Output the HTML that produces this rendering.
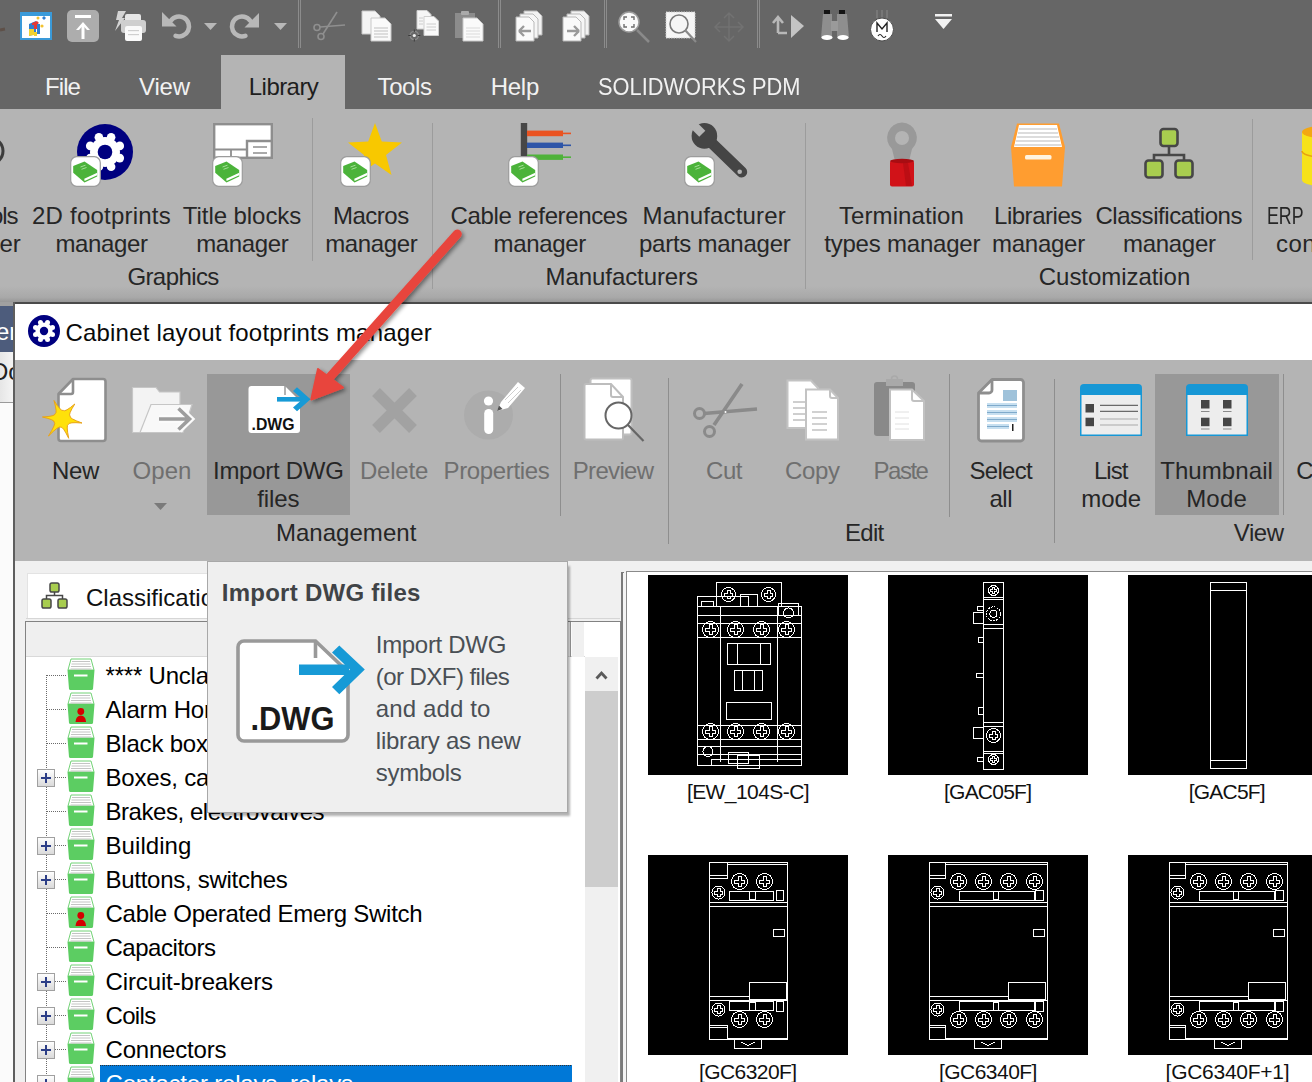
<!DOCTYPE html>
<html><head><meta charset="utf-8"><style>
html,body{margin:0;padding:0;}
body{width:1312px;height:1082px;overflow:hidden;position:relative;background:#f0f0f0;font-family:"Liberation Sans", sans-serif;}
svg{overflow:visible}
</style></head><body>
<div style="position:absolute;left:0px;top:0px;width:1312px;height:109px;background:#666666;"></div>
<div style="position:absolute;left:298px;top:0px;width:1px;height:48px;background:#8c8c8c;"></div>
<div style="position:absolute;left:300px;top:0px;width:1px;height:48px;background:#8c8c8c;"></div>
<div style="position:absolute;left:498px;top:0px;width:1px;height:48px;background:#8c8c8c;"></div>
<div style="position:absolute;left:500px;top:0px;width:1px;height:48px;background:#8c8c8c;"></div>
<div style="position:absolute;left:604px;top:0px;width:1px;height:48px;background:#8c8c8c;"></div>
<div style="position:absolute;left:606px;top:0px;width:1px;height:48px;background:#8c8c8c;"></div>
<div style="position:absolute;left:757px;top:0px;width:1px;height:48px;background:#8c8c8c;"></div>
<div style="position:absolute;left:759px;top:0px;width:1px;height:48px;background:#8c8c8c;"></div>
<div style="position:absolute;left:221px;top:55px;width:124px;height:54px;background:#b4b4b4;"></div>
<div style="position:absolute;left:45.0px;top:75.1px;font-size:24px;line-height:24px;color:#f2f2f2;font-weight:400;letter-spacing:-0.92px;white-space:pre;">File</div>
<div style="position:absolute;left:139.0px;top:75.1px;font-size:24px;line-height:24px;color:#f2f2f2;font-weight:400;letter-spacing:-0.15px;white-space:pre;">View</div>
<div style="position:absolute;left:248.8px;top:75.1px;font-size:24px;line-height:24px;color:#1e1e1e;font-weight:400;letter-spacing:-0.55px;white-space:pre;">Library</div>
<div style="position:absolute;left:377.6px;top:75.1px;font-size:24px;line-height:24px;color:#f2f2f2;font-weight:400;letter-spacing:-0.41px;white-space:pre;">Tools</div>
<div style="position:absolute;left:490.7px;top:75.1px;font-size:24px;line-height:24px;color:#f2f2f2;font-weight:400;letter-spacing:-0.26px;white-space:pre;">Help</div>
<div style="position:absolute;left:598.0px;top:75.1px;font-size:24px;line-height:24px;color:#f2f2f2;font-weight:400;letter-spacing:0.00px;white-space:pre;transform:scaleX(0.9093);transform-origin:0 0;">SOLIDWORKS PDM</div>
<div style="position:absolute;left:0px;top:109px;width:1312px;height:194px;background:#b4b4b4;"></div>
<div style="position:absolute;left:0px;top:286px;width:1312px;height:16px;background:linear-gradient(#b4b4b4,#a9a9a9 70%,#979797);"></div>
<div style="position:absolute;left:0px;top:302px;width:13px;height:4px;background:#a0a0a0;"></div>
<div style="position:absolute;left:13px;top:302px;width:1299px;height:2px;background:#4a4a4a;"></div>
<div style="position:absolute;left:312px;top:118px;width:1px;height:143px;background:#9c9c9c;"></div>
<div style="position:absolute;left:432px;top:123px;width:1px;height:166px;background:#9c9c9c;"></div>
<div style="position:absolute;left:805px;top:123px;width:1px;height:166px;background:#9c9c9c;"></div>
<div style="position:absolute;left:1252px;top:119px;width:1px;height:141px;background:#9c9c9c;"></div>
<div style="position:absolute;left:-10.0px;top:203.6px;font-size:24px;line-height:24px;color:#262626;font-weight:400;letter-spacing:-1.03px;white-space:pre;">ols</div>
<div style="position:absolute;left:-0.5px;top:231.9px;font-size:24px;line-height:24px;color:#262626;font-weight:400;letter-spacing:0.00px;white-space:pre;">er</div>
<div style="position:absolute;left:32.0px;top:203.6px;font-size:24px;line-height:24px;color:#262626;font-weight:400;letter-spacing:0.22px;white-space:pre;">2D footprints</div>
<div style="position:absolute;left:55.4px;top:231.9px;font-size:24px;line-height:24px;color:#262626;font-weight:400;letter-spacing:-0.35px;white-space:pre;">manager</div>
<div style="position:absolute;left:182.8px;top:203.6px;font-size:24px;line-height:24px;color:#262626;font-weight:400;letter-spacing:-0.06px;white-space:pre;">Title blocks</div>
<div style="position:absolute;left:196.2px;top:231.9px;font-size:24px;line-height:24px;color:#262626;font-weight:400;letter-spacing:-0.35px;white-space:pre;">manager</div>
<div style="position:absolute;left:332.9px;top:203.6px;font-size:24px;line-height:24px;color:#262626;font-weight:400;letter-spacing:-0.48px;white-space:pre;">Macros</div>
<div style="position:absolute;left:325.2px;top:231.9px;font-size:24px;line-height:24px;color:#262626;font-weight:400;letter-spacing:-0.35px;white-space:pre;">manager</div>
<div style="position:absolute;left:127.4px;top:264.6px;font-size:24px;line-height:24px;color:#262626;font-weight:400;letter-spacing:-0.59px;white-space:pre;">Graphics</div>
<div style="position:absolute;left:450.6px;top:203.6px;font-size:24px;line-height:24px;color:#262626;font-weight:400;letter-spacing:-0.37px;white-space:pre;">Cable references</div>
<div style="position:absolute;left:493.6px;top:231.9px;font-size:24px;line-height:24px;color:#262626;font-weight:400;letter-spacing:-0.35px;white-space:pre;">manager</div>
<div style="position:absolute;left:642.6px;top:203.6px;font-size:24px;line-height:24px;color:#262626;font-weight:400;letter-spacing:0.16px;white-space:pre;">Manufacturer</div>
<div style="position:absolute;left:639.0px;top:231.9px;font-size:24px;line-height:24px;color:#262626;font-weight:400;letter-spacing:-0.25px;white-space:pre;">parts manager</div>
<div style="position:absolute;left:545.6px;top:264.6px;font-size:24px;line-height:24px;color:#262626;font-weight:400;letter-spacing:-0.08px;white-space:pre;">Manufacturers</div>
<div style="position:absolute;left:839.0px;top:203.6px;font-size:24px;line-height:24px;color:#262626;font-weight:400;letter-spacing:0.08px;white-space:pre;">Termination</div>
<div style="position:absolute;left:824.2px;top:231.9px;font-size:24px;line-height:24px;color:#262626;font-weight:400;letter-spacing:-0.21px;white-space:pre;">types manager</div>
<div style="position:absolute;left:994.0px;top:203.6px;font-size:24px;line-height:24px;color:#262626;font-weight:400;letter-spacing:-0.47px;white-space:pre;">Libraries</div>
<div style="position:absolute;left:992.0px;top:231.9px;font-size:24px;line-height:24px;color:#262626;font-weight:400;letter-spacing:-0.26px;white-space:pre;">manager</div>
<div style="position:absolute;left:1095.4px;top:203.6px;font-size:24px;line-height:24px;color:#262626;font-weight:400;letter-spacing:-0.45px;white-space:pre;">Classifications</div>
<div style="position:absolute;left:1123.0px;top:231.9px;font-size:24px;line-height:24px;color:#262626;font-weight:400;letter-spacing:-0.30px;white-space:pre;">manager</div>
<div style="position:absolute;left:1038.8px;top:264.6px;font-size:24px;line-height:24px;color:#262626;font-weight:400;letter-spacing:-0.05px;white-space:pre;">Customization</div>
<div style="position:absolute;left:1266.5px;top:203.6px;font-size:24px;line-height:24px;color:#262626;font-weight:400;letter-spacing:0.00px;white-space:pre;transform:scaleX(0.7395);transform-origin:0 0;">ERP</div>
<div style="position:absolute;left:1276.0px;top:231.9px;font-size:24px;line-height:24px;color:#262626;font-weight:400;letter-spacing:0.43px;white-space:pre;">con</div>
<div style="position:absolute;left:0px;top:306px;width:13px;height:46px;background:#4d5c7c;"></div>
<div style="position:absolute;left:-4.0px;top:320.1px;font-size:24px;line-height:24px;color:#ffffff;font-weight:400;letter-spacing:0.00px;white-space:pre;">er</div>
<div style="position:absolute;left:0px;top:352px;width:13px;height:50px;background:linear-gradient(90deg,#e6e6e6,#f4f4f4);"></div>
<div style="position:absolute;left:-9.0px;top:360.1px;font-size:24px;line-height:24px;color:#222;font-weight:400;letter-spacing:0.00px;white-space:pre;">Do</div>
<div style="position:absolute;left:0px;top:402px;width:13px;height:1px;background:#9a9a9a;"></div>
<div style="position:absolute;left:0px;top:403px;width:13px;height:679px;background:#fbfbfb;"></div>
<div style="position:absolute;left:13px;top:302px;width:2px;height:780px;background:#5e5e5e;"></div>
<div style="position:absolute;left:15px;top:304px;width:1297px;height:56px;background:#ffffff;"></div>
<div style="position:absolute;left:65.5px;top:321.3px;font-size:24px;line-height:24px;color:#0a0a0a;font-weight:400;letter-spacing:0.19px;white-space:pre;">Cabinet layout footprints manager</div>
<div style="position:absolute;left:15px;top:360px;width:1297px;height:201px;background:#b4b4b4;"></div>
<div style="position:absolute;left:207px;top:374px;width:143px;height:141px;background:#989898;"></div>
<div style="position:absolute;left:1155px;top:374px;width:124px;height:141px;background:#989898;"></div>
<div style="position:absolute;left:560px;top:374px;width:1px;height:142px;background:#8e8e8e;"></div>
<div style="position:absolute;left:668px;top:378px;width:1px;height:166px;background:#8e8e8e;"></div>
<div style="position:absolute;left:949px;top:374px;width:1px;height:143px;background:#8e8e8e;"></div>
<div style="position:absolute;left:1054px;top:379px;width:1px;height:164px;background:#8e8e8e;"></div>
<div style="position:absolute;left:1283px;top:374px;width:1px;height:141px;background:#8e8e8e;"></div>
<div style="position:absolute;left:52.0px;top:459.4px;font-size:24px;line-height:24px;color:#262626;font-weight:400;letter-spacing:-0.34px;white-space:pre;">New</div>
<div style="position:absolute;left:132.5px;top:459.4px;font-size:24px;line-height:24px;color:#6f6f6f;font-weight:400;letter-spacing:0.07px;white-space:pre;">Open</div>
<div style="position:absolute;left:213.0px;top:459.4px;font-size:24px;line-height:24px;color:#262626;font-weight:400;letter-spacing:-0.27px;white-space:pre;">Import DWG</div>
<div style="position:absolute;left:257.3px;top:487.1px;font-size:24px;line-height:24px;color:#262626;font-weight:400;letter-spacing:-0.14px;white-space:pre;">files</div>
<div style="position:absolute;left:360.0px;top:459.4px;font-size:24px;line-height:24px;color:#6f6f6f;font-weight:400;letter-spacing:-0.23px;white-space:pre;">Delete</div>
<div style="position:absolute;left:443.6px;top:459.4px;font-size:24px;line-height:24px;color:#6f6f6f;font-weight:400;letter-spacing:-0.36px;white-space:pre;">Properties</div>
<div style="position:absolute;left:572.7px;top:459.4px;font-size:24px;line-height:24px;color:#6f6f6f;font-weight:400;letter-spacing:-0.65px;white-space:pre;">Preview</div>
<div style="position:absolute;left:275.9px;top:521.1px;font-size:24px;line-height:24px;color:#262626;font-weight:400;letter-spacing:0.04px;white-space:pre;">Management</div>
<div style="position:absolute;left:706.0px;top:459.4px;font-size:24px;line-height:24px;color:#6f6f6f;font-weight:400;letter-spacing:-0.45px;white-space:pre;">Cut</div>
<div style="position:absolute;left:785.0px;top:459.4px;font-size:24px;line-height:24px;color:#6f6f6f;font-weight:400;letter-spacing:-0.38px;white-space:pre;">Copy</div>
<div style="position:absolute;left:873.5px;top:459.4px;font-size:24px;line-height:24px;color:#6f6f6f;font-weight:400;letter-spacing:-1.48px;white-space:pre;">Paste</div>
<div style="position:absolute;left:845.0px;top:521.1px;font-size:24px;line-height:24px;color:#262626;font-weight:400;letter-spacing:-0.74px;white-space:pre;">Edit</div>
<div style="position:absolute;left:969.5px;top:459.4px;font-size:24px;line-height:24px;color:#262626;font-weight:400;letter-spacing:-0.70px;white-space:pre;">Select</div>
<div style="position:absolute;left:989.5px;top:487.1px;font-size:24px;line-height:24px;color:#262626;font-weight:400;letter-spacing:-0.51px;white-space:pre;">all</div>
<div style="position:absolute;left:1093.9px;top:459.4px;font-size:24px;line-height:24px;color:#262626;font-weight:400;letter-spacing:-0.94px;white-space:pre;">List</div>
<div style="position:absolute;left:1081.2px;top:487.1px;font-size:24px;line-height:24px;color:#262626;font-weight:400;letter-spacing:-0.01px;white-space:pre;">mode</div>
<div style="position:absolute;left:1160.2px;top:459.4px;font-size:24px;line-height:24px;color:#262626;font-weight:400;letter-spacing:0.08px;white-space:pre;">Thumbnail</div>
<div style="position:absolute;left:1186.2px;top:487.1px;font-size:24px;line-height:24px;color:#262626;font-weight:400;letter-spacing:0.19px;white-space:pre;">Mode</div>
<div style="position:absolute;left:1233.8px;top:521.1px;font-size:24px;line-height:24px;color:#262626;font-weight:400;letter-spacing:-0.45px;white-space:pre;">View</div>
<div style="position:absolute;left:1296.3px;top:459.4px;font-size:24px;line-height:24px;color:#262626;font-weight:400;letter-spacing:0.00px;white-space:pre;">C</div>
<div style="position:absolute;left:15px;top:561px;width:1297px;height:521px;background:#f0f0f0;"></div>
<div style="position:absolute;left:27px;top:573px;width:500px;height:46px;background:#ffffff;border-top:1px solid #e3e3e3;border-left:1px solid #e3e3e3;box-sizing:border-box"></div>
<div style="position:absolute;left:86.0px;top:586.1px;font-size:24px;line-height:24px;color:#111;font-weight:400;letter-spacing:0.00px;white-space:pre;">Classifications</div>
<div style="position:absolute;left:26px;top:618px;width:594px;height:1px;background:#d6d6d6;"></div>
<div style="position:absolute;left:25px;top:621px;width:596px;height:461px;background:#ffffff;border-top:1px solid #828282;border-left:1px solid #828282;border-right:1px solid #828282;box-sizing:border-box"></div>
<div style="position:absolute;left:26px;top:622px;width:545px;height:34px;background:#efefef;"></div>
<div style="position:absolute;left:26px;top:656px;width:559px;height:1px;background:#d9d9d9;"></div>
<div style="position:absolute;left:570px;top:622px;width:1px;height:35px;background:#9a9a9a;"></div>
<div style="position:absolute;left:572px;top:622px;width:12px;height:35px;background:#f0f0f0;"></div>
<div style="position:absolute;left:585px;top:657px;width:33px;height:425px;background:#f0f0f0;"></div>
<div style="position:absolute;left:585px;top:691px;width:33px;height:196px;background:#cdcdcd;"></div>
<div style="position:absolute;left:621px;top:571.5px;width:3px;height:1.5px;background:#7a7a7a;"></div>
<div style="position:absolute;left:621px;top:572px;width:2px;height:510px;background:#7a7a7a;"></div>
<div style="position:absolute;left:623px;top:573px;width:3px;height:509px;background:#f4f4f4;"></div>
<div style="position:absolute;left:626px;top:571px;width:686px;height:511px;background:#ffffff;border-top:1px solid #8a8a8a;border-left:1px solid #8a8a8a;box-sizing:border-box"></div>
<div style="position:absolute;left:648px;top:575px;width:200px;height:200px;background:#000;"></div>
<div style="position:absolute;left:648px;top:855px;width:200px;height:200px;background:#000;"></div>
<div style="position:absolute;left:888px;top:575px;width:200px;height:200px;background:#000;"></div>
<div style="position:absolute;left:888px;top:855px;width:200px;height:200px;background:#000;"></div>
<div style="position:absolute;left:1128px;top:575px;width:200px;height:200px;background:#000;"></div>
<div style="position:absolute;left:1128px;top:855px;width:200px;height:200px;background:#000;"></div>
<div style="position:absolute;left:686.9px;top:781.1px;font-size:21px;line-height:21px;color:#111;font-weight:400;letter-spacing:-0.56px;white-space:pre;">[EW_104S-C]</div>
<div style="position:absolute;left:944.0px;top:781.1px;font-size:21px;line-height:21px;color:#111;font-weight:400;letter-spacing:-0.77px;white-space:pre;">[GAC05F]</div>
<div style="position:absolute;left:1188.8px;top:781.1px;font-size:21px;line-height:21px;color:#111;font-weight:400;letter-spacing:-0.81px;white-space:pre;">[GAC5F]</div>
<div style="position:absolute;left:698.9px;top:1061.1px;font-size:21px;line-height:21px;color:#111;font-weight:400;letter-spacing:-0.56px;white-space:pre;">[GC6320F]</div>
<div style="position:absolute;left:939.0px;top:1061.1px;font-size:21px;line-height:21px;color:#111;font-weight:400;letter-spacing:-0.54px;white-space:pre;">[GC6340F]</div>
<div style="position:absolute;left:1165.6px;top:1061.1px;font-size:21px;line-height:21px;color:#111;font-weight:400;letter-spacing:-0.27px;white-space:pre;">[GC6340F+1]</div>
<div style="position:absolute;left:100px;top:1065px;width:472px;height:20px;background:#0078d7;"></div>
<div style="position:absolute;left:105.5px;top:663.6px;font-size:24px;line-height:24px;color:#000;font-weight:400;letter-spacing:0.00px;white-space:pre;letter-spacing:-0.2px">**** Unclassified</div>
<div style="position:absolute;left:105.5px;top:697.6px;font-size:24px;line-height:24px;color:#000;font-weight:400;letter-spacing:0.00px;white-space:pre;letter-spacing:-0.2px">Alarm Horns</div>
<div style="position:absolute;left:105.5px;top:731.6px;font-size:24px;line-height:24px;color:#000;font-weight:400;letter-spacing:0.00px;white-space:pre;letter-spacing:-0.2px">Black boxes</div>
<div style="position:absolute;left:105.5px;top:765.6px;font-size:24px;line-height:24px;color:#000;font-weight:400;letter-spacing:0.00px;white-space:pre;letter-spacing:-0.2px">Boxes, cabinets</div>
<div style="position:absolute;left:105.5px;top:799.6px;font-size:24px;line-height:24px;color:#000;font-weight:400;letter-spacing:-0.45px;white-space:pre;">Brakes, electrovalves</div>
<div style="position:absolute;left:105.5px;top:833.6px;font-size:24px;line-height:24px;color:#000;font-weight:400;letter-spacing:0.07px;white-space:pre;">Building</div>
<div style="position:absolute;left:105.5px;top:867.6px;font-size:24px;line-height:24px;color:#000;font-weight:400;letter-spacing:-0.28px;white-space:pre;">Buttons, switches</div>
<div style="position:absolute;left:105.5px;top:901.6px;font-size:24px;line-height:24px;color:#000;font-weight:400;letter-spacing:-0.27px;white-space:pre;">Cable Operated Emerg Switch</div>
<div style="position:absolute;left:105.5px;top:935.6px;font-size:24px;line-height:24px;color:#000;font-weight:400;letter-spacing:-0.47px;white-space:pre;">Capacitors</div>
<div style="position:absolute;left:105.5px;top:969.6px;font-size:24px;line-height:24px;color:#000;font-weight:400;letter-spacing:-0.12px;white-space:pre;">Circuit-breakers</div>
<div style="position:absolute;left:105.5px;top:1003.6px;font-size:24px;line-height:24px;color:#000;font-weight:400;letter-spacing:-0.67px;white-space:pre;">Coils</div>
<div style="position:absolute;left:105.5px;top:1037.6px;font-size:24px;line-height:24px;color:#000;font-weight:400;letter-spacing:-0.20px;white-space:pre;">Connectors</div>
<div style="position:absolute;left:105.5px;top:1071.6px;font-size:24px;line-height:24px;color:#ffffff;font-weight:400;letter-spacing:0.00px;white-space:pre;letter-spacing:-0.2px">Contactor relays, relays</div>
<div style="position:absolute;left:0px;top:28px;width:5px;height:3px;background:#5e5048;transform:rotate(-10deg)"></div>
<svg style="position:absolute;left:20px;top:12px;" width="32" height="28" viewBox="0 0 32 28">
<rect x="1" y="1" width="30" height="26" fill="#fff" stroke="#3a9ad9" stroke-width="2"/>
<rect x="1" y="1" width="30" height="3" fill="#3a9ad9"/>
<path d="M9 12 L16 9 L16 22 L9 24 Z" fill="#2f7fd0"/>
<path d="M12 11 L17 9 L19 11 L16 13 L12 13Z" fill="#e53935"/>
<rect x="14" y="11" width="4" height="6" fill="#e53935"/>
<path d="M9 17 L14 17 L14 23 L9 24Z" fill="#f2d230"/>
<path d="M14 20 L17 20 L17 24 L14 24Z" fill="#f2d230"/>
<rect x="17" y="12" width="3" height="10" fill="#2f7fd0"/>
<circle cx="18" cy="6" r="1.5" fill="#f2c230"/>
<path d="M24 4 l2 2 l-2 2 l-2 -2z" fill="#2f7fd0"/>
<circle cx="22" cy="14" r="1.6" fill="#f2c230"/>
</svg>
<svg style="position:absolute;left:67px;top:10px;" width="32" height="32" viewBox="0 0 32 32">
<rect x="0" y="0" width="32" height="32" rx="5" fill="#adadad"/>
<rect x="8" y="5" width="16" height="3" fill="#fff"/>
<rect x="14.5" y="15" width="3" height="14" fill="#fff"/>
<path d="M9 20 L16 12 L23 20 L20 20 L16 15.5 L12 20Z" fill="#fff"/>
</svg>
<svg style="position:absolute;left:114px;top:11px;" width="32" height="30" viewBox="0 0 32 30">
<path d="M4 0 L12 0 L8 7 L11 7 L1 20 L5 9 L2 9Z" fill="#d4d4d4"/>
<rect x="11" y="3" width="16" height="8" rx="2" fill="#e6e6e6"/>
<rect x="7" y="9" width="25" height="13" rx="3" fill="#cfcfcf"/>
<rect x="11" y="15" width="17" height="15" rx="2" fill="#fafafa"/>
<rect x="14" y="19" width="11" height="1.2" fill="#cfcfcf"/>
<rect x="14" y="23" width="11" height="1.2" fill="#cfcfcf"/>
</svg>
<svg style="position:absolute;left:160px;top:8px;" width="32" height="36" viewBox="0 0 32 36">
<path d="M10.8 12.8 A10 10 0 1 1 15.6 27.9" fill="none" stroke="#b8b8b8" stroke-width="4.6" stroke-linecap="round"/>
<path d="M2 4 L2 18.5 L16.5 18.5Z" fill="#b8b8b8"/>
</svg>
<svg style="position:absolute;left:203.5px;top:23px;" width="13" height="8" viewBox="0 0 13 8"><path d="M0 0 L13 0 L6.5 7Z" fill="#b8b8b8"/></svg>
<svg style="position:absolute;left:229px;top:8px;" width="32" height="36" viewBox="0 0 32 36">
<path d="M21.2 12.8 A10 10 0 1 0 16.4 27.9" fill="none" stroke="#b8b8b8" stroke-width="4.6" stroke-linecap="round"/>
<path d="M30 5 L30 19.5 L15.5 19.5Z" fill="#b8b8b8"/>
</svg>
<svg style="position:absolute;left:274px;top:23px;" width="13" height="8" viewBox="0 0 13 8"><path d="M0 0 L13 0 L6.5 7Z" fill="#b8b8b8"/></svg>
<svg style="position:absolute;left:313px;top:12px;" width="32" height="28" viewBox="0 0 32 28">
<g stroke="#8f8f8f" stroke-width="1.6" fill="none">
<path d="M24 0 L10 22"/><path d="M7 15 L32 13"/>
<circle cx="4" cy="15.5" r="3"/><circle cx="8" cy="24.5" r="3"/>
</g></svg>
<svg style="position:absolute;left:361px;top:10px;" width="31" height="32" viewBox="0 0 31 32">
<path d="M1 1 H14 L19 6 V24 H1Z" fill="#f4f4f4" stroke="#c8c8c8" stroke-width="1"/>
<path d="M10 8 H24 L30 14 V31 H10Z" fill="#fafafa" stroke="#c8c8c8" stroke-width="1"/>
<g stroke="#c0c0c0" stroke-width="1"><path d="M13 18H27M13 21H27M13 24H27M13 27H27"/></g>
</svg>
<svg style="position:absolute;left:404px;top:9px;" width="36" height="34" viewBox="0 0 36 34">
<path d="M13 1.5 H23 L27 5.5 V20 H13Z" fill="#f6f6f6" stroke="#cfcfcf" stroke-width="1"/>
<path d="M20 7.5 H30 L34.5 12 V26.5 H20Z" fill="#fafafa" stroke="#cfcfcf" stroke-width="1"/>
<g stroke="#c8c8c8" stroke-width="0.9"><path d="M22.5 15H32M22.5 18H32M22.5 21H32M15 9H19M15 12H19M15 15H19"/></g>
<circle cx="10.3" cy="26.5" r="4.2" fill="none" stroke="#8a8a8a" stroke-width="1.2"/>
<circle cx="10.3" cy="26.5" r="1.6" fill="#f0f0f0"/>
<path d="M10.3 20.5V23M10.3 30V32.5M4.3 26.5H6.8M13.8 26.5H16.3" stroke="#3a3a3a" stroke-width="1"/>
</svg>
<svg style="position:absolute;left:455px;top:10px;" width="30" height="32" viewBox="0 0 30 32">
<rect x="0" y="3" width="20" height="25" fill="#8c8c8c"/>
<rect x="6" y="1" width="8" height="4" rx="1" fill="#aaaaaa"/>
<path d="M8 8 H22 L28 14 V31 H8Z" fill="#fafafa" stroke="#c8c8c8" stroke-width="1"/>
<g stroke="#dadada" stroke-width="1"><path d="M11 18H25M11 21H25M11 24H25M11 27H25"/></g>
</svg>
<svg style="position:absolute;left:515px;top:10px;" width="28" height="32" viewBox="0 0 28 32">
<path d="M9 1 H22 L27 6 V25 H9Z" fill="#f2f2f2" stroke="#b8b8b8" stroke-width="1"/>
<path d="M5 4 H18 L23 9 V28 H5Z" fill="#f6f6f6" stroke="#b8b8b8" stroke-width="1"/>
<path d="M1 7 H14 L19 12 V31 H1Z" fill="#fafafa" stroke="#b8b8b8" stroke-width="1"/>
<path d="M6 19 H18 M6 19 L11 14 M6 19 L11 24" stroke="#9a9a9a" stroke-width="2.4" fill="none" transform="translate(-2,2)"/>
</svg>
<svg style="position:absolute;left:562px;top:10px;" width="28" height="32" viewBox="0 0 28 32">
<path d="M9 1 H22 L27 6 V25 H9Z" fill="#f2f2f2" stroke="#b8b8b8" stroke-width="1"/>
<path d="M5 4 H18 L23 9 V28 H5Z" fill="#f6f6f6" stroke="#b8b8b8" stroke-width="1"/>
<path d="M1 7 H14 L19 12 V31 H1Z" fill="#fafafa" stroke="#b8b8b8" stroke-width="1"/>
<path d="M7 19 H19 M19 19 L14 14 M19 19 L14 24" stroke="#9a9a9a" stroke-width="2.4" fill="none" transform="translate(-2,2)"/>
</svg>
<svg style="position:absolute;left:619px;top:12px;" width="32" height="31" viewBox="0 0 32 31">
<path d="M18 18 L30 30" stroke="#8a8a8a" stroke-width="2.5"/>
<circle cx="10" cy="10" r="10" fill="#fafafa" stroke="#9c9c9c" stroke-width="1.5"/>
<path d="M5 8V5H8M12 5H15V8M15 12V15H12M8 15H5V12" stroke="#6e6e6e" stroke-width="1.4" fill="none"/>
</svg>
<svg style="position:absolute;left:666px;top:12px;" width="32" height="32" viewBox="0 0 32 32">
<rect x="0" y="0" width="29" height="26" fill="#f6f6f6" stroke="#d0d0d0" stroke-dasharray="1.5 1" stroke-width="1"/>
<circle cx="13" cy="12" r="9" fill="none" stroke="#7a7a7a" stroke-width="1.6"/>
<path d="M19 18 L30 30" stroke="#8a8a8a" stroke-width="2.2"/>
</svg>
<svg style="position:absolute;left:714px;top:12px;" width="30" height="30" viewBox="0 0 30 30">
<g stroke="#727272" stroke-width="1.5" fill="none"><path d="M15 1V29M1 15H29M10 6L15 1L20 6M10 24L15 29L20 24M6 10L1 15L6 20M24 10L29 15L24 20"/></g>
</svg>
<svg style="position:absolute;left:772px;top:14px;" width="32" height="24" viewBox="0 0 32 24">
<path d="M6 19V4 M1 9L6 3L11 9 M6 19H15" stroke="#b8b8b8" stroke-width="2.6" fill="none"/>
<path d="M19 1 L32 12 L19 24Z" fill="#c4c4c4"/>
</svg>
<svg style="position:absolute;left:821px;top:9px;" width="28" height="32" viewBox="0 0 28 32">
<rect x="3" y="1" width="6" height="4" fill="#141414"/><rect x="18" y="1" width="6" height="4" fill="#141414"/>
<path d="M2 5 H11 V29 H0 Z" fill="#8e8e8e"/><path d="M16 5 H26 L28 29 H16Z" fill="#8e8e8e"/>
<rect x="10" y="12" width="7" height="10" fill="#9a9a9a"/>
<ellipse cx="6" cy="28.5" rx="5.5" ry="2.5" fill="#fff"/><ellipse cx="22" cy="28.5" rx="5.5" ry="2.5" fill="#fff"/>
</svg>
<svg style="position:absolute;left:869px;top:10px;" width="26" height="32" viewBox="0 0 26 32">
<g stroke="#888" stroke-width="1"><path d="M8 0V8M13 0V8M18 0V8"/></g>
<circle cx="13" cy="19.5" r="11.5" fill="#fff" stroke="#4a4a4a" stroke-width="1"/>
<path d="M8 22V13L13 19L18 13V22" fill="none" stroke="#222" stroke-width="1.4"/>
<path d="M9 26 q2 -3 4 0 t4 0" fill="none" stroke="#222" stroke-width="1.1"/>
</svg>
<svg style="position:absolute;left:935px;top:14px;" width="17" height="16" viewBox="0 0 17 16">
<rect x="0" y="0" width="17" height="2.5" fill="#f2f2f2"/>
<path d="M0 5 H17 L8.5 15Z" fill="#f2f2f2"/>
</svg>
<svg style="position:absolute;left:-25px;top:136px;" width="30" height="30" viewBox="0 0 30 30"><circle cx="15" cy="15" r="13" fill="none" stroke="#3c3c3c" stroke-width="3"/></svg>
<svg style="position:absolute;left:77px;top:123.5px;" width="56" height="56" viewBox="0 0 56 56"><circle cx="28" cy="28" r="28" fill="#00007f"/><circle cx="28" cy="28" r="15" fill="#fff"/><circle cx="42.78" cy="34.12" r="4.3" fill="#fff"/><circle cx="34.12" cy="42.78" r="4.3" fill="#fff"/><circle cx="21.88" cy="42.78" r="4.3" fill="#fff"/><circle cx="13.22" cy="34.12" r="4.3" fill="#fff"/><circle cx="13.22" cy="21.88" r="4.3" fill="#fff"/><circle cx="21.88" cy="13.22" r="4.3" fill="#fff"/><circle cx="34.12" cy="13.22" r="4.3" fill="#fff"/><circle cx="42.78" cy="21.88" r="4.3" fill="#fff"/><circle cx="28" cy="28" r="7.3" fill="#00007f"/></svg>
<svg style="position:absolute;left:69.5px;top:156px;" width="31" height="31" viewBox="0 0 31 31">
<rect x="0.7" y="0.7" width="29.6" height="29.6" rx="6" fill="#fff" stroke="#9c9c9c" stroke-width="1.2"/>
<path d="M3.2 10 L14.5 5.5 L27.2 14 L27.2 20.5 L14.5 26.5 L3.2 16.8Z" fill="#4bb33a"/>
<path d="M14.3 22.8 L27.2 16.8 L27.2 19.2 L14.6 25Z" fill="#fff"/>
<path d="M10.5 11 l5 -1.8 M11.5 13.3 l5 -1.8" stroke="#a6dd99" stroke-width="1"/>
</svg>
<svg style="position:absolute;left:213px;top:123px;" width="60" height="36" viewBox="0 0 60 36">
<rect x="1.2" y="1.2" width="57.6" height="33.6" fill="#fff" stroke="#8e8e8e" stroke-width="2.4"/>
<path d="M34 35 V18 H58" fill="none" stroke="#8e8e8e" stroke-width="2.4"/>
<path d="M1 26.5 H34 M18 26.5 V35" fill="none" stroke="#8e8e8e" stroke-width="1.8"/>
<path d="M40 24 H54 M40 30 H54" stroke="#8e8e8e" stroke-width="1.6"/>
</svg>
<svg style="position:absolute;left:211.5px;top:155.5px;" width="31" height="31" viewBox="0 0 31 31">
<rect x="0.7" y="0.7" width="29.6" height="29.6" rx="6" fill="#fff" stroke="#9c9c9c" stroke-width="1.2"/>
<path d="M3.2 10 L14.5 5.5 L27.2 14 L27.2 20.5 L14.5 26.5 L3.2 16.8Z" fill="#4bb33a"/>
<path d="M14.3 22.8 L27.2 16.8 L27.2 19.2 L14.6 25Z" fill="#fff"/>
<path d="M10.5 11 l5 -1.8 M11.5 13.3 l5 -1.8" stroke="#a6dd99" stroke-width="1"/>
</svg>
<svg style="position:absolute;left:347px;top:122px;" width="56" height="54" viewBox="0 0 56 54">
<path d="M28 1 L34.8 19.5 L55 20.5 L39 33 L44.5 53 L28 41.5 L11.5 53 L17 33 L1 20.5 L21.2 19.5Z" fill="#f8c800"/>
</svg>
<svg style="position:absolute;left:339.5px;top:156px;" width="31" height="31" viewBox="0 0 31 31">
<rect x="0.7" y="0.7" width="29.6" height="29.6" rx="6" fill="#fff" stroke="#9c9c9c" stroke-width="1.2"/>
<path d="M3.2 10 L14.5 5.5 L27.2 14 L27.2 20.5 L14.5 26.5 L3.2 16.8Z" fill="#4bb33a"/>
<path d="M14.3 22.8 L27.2 16.8 L27.2 19.2 L14.6 25Z" fill="#fff"/>
<path d="M10.5 11 l5 -1.8 M11.5 13.3 l5 -1.8" stroke="#a6dd99" stroke-width="1"/>
</svg>
<svg style="position:absolute;left:520px;top:122px;" width="52" height="40" viewBox="0 0 52 40">
<rect x="0.8" y="1" width="6.4" height="33" fill="#474747"/>
<rect x="7" y="8.6" width="36" height="5.6" fill="#ea5321"/><rect x="43" y="10.6" width="8" height="1.6" fill="#ea5321"/>
<rect x="7" y="20.6" width="36" height="5.4" fill="#2e55a8"/><rect x="43" y="22.5" width="8" height="1.6" fill="#2e55a8"/>
<rect x="7" y="32.5" width="36" height="5.4" fill="#4fb23a"/><rect x="43" y="34.4" width="8" height="1.6" fill="#4fb23a"/>
</svg>
<svg style="position:absolute;left:507.5px;top:156px;" width="31" height="31" viewBox="0 0 31 31">
<rect x="0.7" y="0.7" width="29.6" height="29.6" rx="6" fill="#fff" stroke="#9c9c9c" stroke-width="1.2"/>
<path d="M3.2 10 L14.5 5.5 L27.2 14 L27.2 20.5 L14.5 26.5 L3.2 16.8Z" fill="#4bb33a"/>
<path d="M14.3 22.8 L27.2 16.8 L27.2 19.2 L14.6 25Z" fill="#fff"/>
<path d="M10.5 11 l5 -1.8 M11.5 13.3 l5 -1.8" stroke="#a6dd99" stroke-width="1"/>
</svg>
<svg style="position:absolute;left:680px;top:115px;" width="70" height="70" viewBox="0 0 70 70">
<path d="M24.4 20.9 L61.7 57" stroke="#454545" stroke-width="11" stroke-linecap="round"/>
<circle cx="24.4" cy="20.9" r="12.8" fill="#454545"/>
<path d="M19.24 21.82 L25.32 15.74 L16.83 7.25 L10.75 13.33Z" fill="#b4b4b4"/>
<path d="M21.5 17.5 L12 8 L8 12Z" fill="#b4b4b4"/>
<circle cx="59.7" cy="56.7" r="2.3" fill="#b4b4b4"/>
</svg>
<svg style="position:absolute;left:684px;top:156px;" width="31" height="31" viewBox="0 0 31 31">
<rect x="0.7" y="0.7" width="29.6" height="29.6" rx="6" fill="#fff" stroke="#9c9c9c" stroke-width="1.2"/>
<path d="M3.2 10 L14.5 5.5 L27.2 14 L27.2 20.5 L14.5 26.5 L3.2 16.8Z" fill="#4bb33a"/>
<path d="M14.3 22.8 L27.2 16.8 L27.2 19.2 L14.6 25Z" fill="#fff"/>
<path d="M10.5 11 l5 -1.8 M11.5 13.3 l5 -1.8" stroke="#a6dd99" stroke-width="1"/>
</svg>
<svg style="position:absolute;left:886px;top:122px;" width="32" height="66" viewBox="0 0 32 66">
<path d="M16 0.5 A15.3 15.3 0 0 1 26 27 L23 39 H9 L6 27 A15.3 15.3 0 0 1 16 0.5Z" fill="#999999"/>
<circle cx="16" cy="16" r="7" fill="#b4b4b4"/>
<rect x="4" y="38.5" width="24" height="26" rx="2" fill="#d11218"/>
<ellipse cx="16" cy="39" rx="12" ry="2.2" fill="#a80d12"/>
<path d="M17 41 L22 41 L26 64 L20 64Z" fill="#ad0c12" opacity="0.6"/>
</svg>
<svg style="position:absolute;left:1010px;top:122px;" width="56" height="66" viewBox="0 0 56 66">
<path d="M7 1.5 H49 L55 25 H1Z" fill="#ff9d30"/>
<path d="M9 3 H47 L52 25 H4Z" fill="#ffffff"/>
<g stroke="#b9b9b9" stroke-width="1.1"><path d="M9 7H47M8 11H48M7 15H49M6 19H50M5 23H51"/></g>
<path d="M1 25 H55 L52 64.5 H4Z" fill="#ff9d30"/>
<rect x="15" y="33" width="26.5" height="4.5" rx="1.5" fill="#fff4e0"/>
</svg>
<svg style="position:absolute;left:1144px;top:127px;" width="50" height="53" viewBox="0 0 50 53">
<g stroke="#474747" stroke-width="2.6" fill="#a8cd4f">
<path d="M25 19 V28 M10 34 V28 H40 V34" fill="none"/>
<rect x="16.5" y="2" width="17" height="17" rx="3"/>
<rect x="1.5" y="33.5" width="17" height="17" rx="3"/>
<rect x="31.5" y="33.5" width="17" height="17" rx="3"/>
</g></svg>
<svg style="position:absolute;left:1302px;top:124px;" width="30" height="62" viewBox="0 0 30 62">
<path d="M0 8 V56 A20 6 0 0 0 40 56 V8Z" fill="#f7e21a"/>
<ellipse cx="20" cy="8" rx="20" ry="6" fill="#f3a712"/>
<path d="M0 27 A20 6 0 0 0 40 27" fill="none" stroke="#e8a20f" stroke-width="1.6"/>
</svg>
<svg style="position:absolute;left:28px;top:315px;" width="32" height="32" viewBox="0 0 32 32"><circle cx="16" cy="16" r="16" fill="#000080"/><circle cx="16" cy="16" r="8.6" fill="#fff"/><circle cx="24.50" cy="19.52" r="2.5" fill="#fff"/><circle cx="19.52" cy="24.50" r="2.5" fill="#fff"/><circle cx="12.48" cy="24.50" r="2.5" fill="#fff"/><circle cx="7.50" cy="19.52" r="2.5" fill="#fff"/><circle cx="7.50" cy="12.48" r="2.5" fill="#fff"/><circle cx="12.48" cy="7.50" r="2.5" fill="#fff"/><circle cx="19.52" cy="7.50" r="2.5" fill="#fff"/><circle cx="24.50" cy="12.48" r="2.5" fill="#fff"/><circle cx="16" cy="16" r="4.2" fill="#000080"/></svg>
<svg style="position:absolute;left:40px;top:376px;" width="68" height="68" viewBox="0 0 68 68">
<path d="M33 3 H63 A2.5 2.5 0 0 1 65.5 5.5 V62.5 A2.5 2.5 0 0 1 63 65 H21 A2.5 2.5 0 0 1 18.5 62.5 V18 Z" fill="#fff" stroke="#8e8e8e" stroke-width="2.6" stroke-linejoin="round"/>
<path d="M33 3 V16 A2 2 0 0 1 31 18 H18.5" fill="none" stroke="#8e8e8e" stroke-width="2.6"/>
<path d="M14.0 24.5 Q21.1 35.9 23.3 34.4 Q24.9 36.4 34.8 28.0 Q27.8 38.9 30.1 40.1 Q29.0 42.4 42.0 47.0 Q28.3 45.9 28.4 48.4 Q25.9 48.6 28.7 62.3 Q22.6 49.8 20.6 51.2 Q19.2 49.2 8.5 60.0 Q16.5 47.1 14.2 46.2 Q15.1 43.9 2.4 41.0 Q15.4 40.3 15.1 37.8 Q17.6 37.4 14.0 24.5 Z" fill="#ffe10a" stroke="#e9a21b" stroke-width="1" stroke-linejoin="round"/>
</svg>
<svg style="position:absolute;left:131px;top:386px;" width="66" height="50" viewBox="0 0 66 50">
<path d="M1.5 1.5 H25 L28.5 6 H49 V46.5 H1.5Z" fill="#f3f3f3" stroke="#c6c6c6" stroke-width="1.2"/>
<path d="M9 46.5 L20 18.5 H61 L52 46.5Z" fill="#f8f8f8" stroke="#c6c6c6" stroke-width="1.2"/>
<path d="M28 33 H57 M47.5 22.5 L58.5 33 L47.5 43.5" fill="none" stroke="#fbfbfb" stroke-width="8" stroke-linejoin="miter"/>
<path d="M28 33 H57 M47.5 22.5 L58.5 33 L47.5 43.5" fill="none" stroke="#9d9d9d" stroke-width="3.6"/>
</svg>
<svg style="position:absolute;left:248px;top:385px;" width="64" height="50" viewBox="0 0 64 50">
<path d="M3 1 H37 L52 16 V45 A3 3 0 0 1 49 48 H3.5 A3 3 0 0 1 0.5 45 V4 A3 3 0 0 1 3.5 1Z" fill="#fff"/>
<path d="M37 1 V10" stroke="#8a8a8a" stroke-width="1.3"/>
<text x="3.5" y="45" font-family="Liberation Sans" font-weight="700" font-size="16.5" fill="#111" textLength="43" lengthAdjust="spacingAndGlyphs">.DWG</text>
<rect x="29" y="12" width="29" height="4.6" fill="#179ad6"/>
<path d="M49 2.3 L62.5 14.2 L49 26.2 L45 22.6 L54.5 14.2 L45 5.9Z" fill="#179ad6"/>
</svg>
<svg style="position:absolute;left:371px;top:387px;" width="47" height="47" viewBox="0 0 47 47"><path d="M5 5 L42 42 M42 5 L5 42" stroke="#a2a2a2" stroke-width="11"/></svg>
<svg style="position:absolute;left:154px;top:503px;" width="13" height="7" viewBox="0 0 13 7"><path d="M0 0 H13 L6.5 7Z" fill="#7a7a7a"/></svg>
<svg style="position:absolute;left:463px;top:378px;" width="60" height="64" viewBox="0 0 60 64">
<circle cx="25.5" cy="37" r="24.5" fill="#acacac"/>
<circle cx="25.5" cy="23" r="4.6" fill="#fff"/>
<rect x="21.2" y="31" width="9" height="25" rx="4.5" fill="#fff"/>
<path d="M34 33 L38 24 L55 4 L62 10 L45 30Z" fill="#fff"/>
<path d="M34 33 L36 27.5 L39.5 31Z" fill="#555"/>
<path d="M42 22 L55 9 M45 25 L58 12" stroke="#c8c8c8" stroke-width="0.9"/>
</svg>
<svg style="position:absolute;left:583px;top:377px;" width="64" height="66" viewBox="0 0 64 66">
<rect x="7.5" y="1.5" width="41" height="56" rx="2" fill="#fff" stroke="#c0c0c0" stroke-width="2"/>
<path d="M3 7 H28 L40 20 V61 A1.5 1.5 0 0 1 38.5 62.5 H3 A1.5 1.5 0 0 1 1.5 61 V8.5 A1.5 1.5 0 0 1 3 7Z" fill="#fff" stroke="#bdbdbd" stroke-width="2"/>
<path d="M28 7 V18 A2 2 0 0 0 30 20 H40" fill="none" stroke="#bdbdbd" stroke-width="2"/>
<circle cx="35.5" cy="38.5" r="13" fill="#fff" stroke="#666" stroke-width="2"/>
<path d="M45 48 L60.5 64" stroke="#666" stroke-width="2.2"/>
</svg>
<svg style="position:absolute;left:693px;top:380px;" width="66" height="60" viewBox="0 0 66 60">
<g fill="none" stroke="#8a8a8a">
<path d="M49 4 L21 45" stroke-width="3.6"/>
<path d="M64 29 L11 33.5" stroke-width="3.6"/>
<circle cx="16.5" cy="51.5" r="5" stroke-width="3"/>
<circle cx="6.5" cy="33.5" r="5" stroke-width="3"/>
</g>
<circle cx="32.5" cy="32" r="1" fill="#fff"/>
</svg>
<svg style="position:absolute;left:785px;top:379px;" width="56" height="63" viewBox="0 0 56 63">
<path d="M2.5 1.5 H26 L33 9 V49 H2.5Z" fill="#fff" stroke="#c3c3c3" stroke-width="2"/>
<g stroke="#9e9e9e" stroke-width="1"><path d="M8 23H20M8 29H20M8 35H20M8 41H20"/></g>
<path d="M21 10.5 H45 L53 19 V60.5 H21Z" fill="#fff" stroke="#c3c3c3" stroke-width="2"/>
<path d="M45 10.5 V17 A2 2 0 0 0 47 19 H53" fill="none" stroke="#c3c3c3" stroke-width="2"/>
<g stroke="#a3a3a3" stroke-width="1"><path d="M27 33H42M27 39H42M27 45H42M27 51H42"/></g>
</svg>
<svg style="position:absolute;left:873px;top:377px;" width="56" height="66" viewBox="0 0 56 66">
<rect x="1" y="5" width="41" height="54" rx="3" fill="#898989"/>
<rect x="13" y="2" width="17" height="7" fill="#a9a9a9"/>
<path d="M18.5 2 A3 3 0 0 1 24.5 2" fill="none" stroke="#a9a9a9" stroke-width="1.5"/>
<path d="M17 12.5 H39 L51 24 V63 H17Z" fill="#fff" stroke="#c1c1c1" stroke-width="2"/>
<path d="M39 12.5 V22 A2 2 0 0 0 41 24 H51" fill="none" stroke="#c1c1c1" stroke-width="2"/>
<g stroke="#e0e0e0" stroke-width="1"><path d="M22 35H36M22 41H36M22 47H36M22 52H36"/></g>
</svg>
<svg style="position:absolute;left:977px;top:377px;" width="50" height="66" viewBox="0 0 50 66">
<path d="M15 2.5 H43.5 A3 3 0 0 1 46.5 5.5 V61 A3 3 0 0 1 43.5 64 H4.5 A3 3 0 0 1 1.5 61 V16 Z" fill="#fff" stroke="#8e8e8e" stroke-width="2.8" stroke-linejoin="round"/>
<path d="M15 2.5 V13 A3 3 0 0 1 12 16 H1.5" fill="none" stroke="#8e8e8e" stroke-width="2.8"/>
<rect x="26" y="13" width="14" height="11" fill="#9fc2da"/>
<g fill="#c6dff0"><rect x="10" y="26" width="30" height="5"/><rect x="10" y="33" width="30" height="5"/><rect x="10" y="40" width="30" height="5"/><rect x="10" y="47" width="22" height="5"/></g>
<g stroke="#7faacb" stroke-width="1"><path d="M10 28.5H40M10 35.5H40M10 42.5H40M10 49.5H32"/></g>
<rect x="35" y="47" width="1.5" height="7" fill="#222"/>
</svg>
<svg style="position:absolute;left:1079px;top:383px;" width="64" height="54" viewBox="0 0 64 54">
<path d="M1 5 A4 4 0 0 1 5 1 H59 A4 4 0 0 1 63 5 V53 H1Z" fill="#1797d5"/>
<rect x="2.5" y="12" width="59" height="39.5" fill="#ededed"/>

<rect x="6.5" y="21" width="8.5" height="8.5" fill="#464646"/><rect x="6.5" y="34.7" width="8.5" height="8.5" fill="#464646"/>
<g stroke-width="1.2"><path d="M21 22.3H59M21 28.3H59" stroke="#6a6a6a"/><path d="M21 36H59M21 42H59" stroke="#a9a9a9"/></g>
</svg>
<svg style="position:absolute;left:1185px;top:383px;" width="64" height="54" viewBox="0 0 64 54">
<path d="M1 5 A4 4 0 0 1 5 1 H59 A4 4 0 0 1 63 5 V53 H1Z" fill="#1797d5"/>
<rect x="2.5" y="12" width="59" height="39.5" fill="#ededed"/>

<rect x="16" y="17" width="8.5" height="8.5" fill="#464646"/><rect x="38" y="17" width="8.5" height="8.5" fill="#464646"/>
<rect x="16" y="34.7" width="8.5" height="8.5" fill="#464646"/><rect x="38" y="34.7" width="8.5" height="8.5" fill="#464646"/>
<g stroke-width="1.2" stroke="#8a8a8a"><path d="M16 28.5H24.5M38 28.5H46.5M16 46H24.5M38 46H46.5"/></g>
</svg>
<svg style="position:absolute;left:40.5px;top:581.5px;" width="27" height="27" viewBox="0 0 27 27">
<g stroke="#474747" stroke-width="1.5" fill="#a8cd4f">
<path d="M13.5 9.5 V13.5 M5.5 17 V13.5 H21.5 V17" fill="none"/>
<rect x="9" y="1" width="9" height="9" rx="1.8"/>
<rect x="1" y="17" width="9" height="9" rx="1.8"/>
<rect x="17" y="17" width="9" height="9" rx="1.8"/>
</g></svg>
<svg style="position:absolute;left:0px;top:0px;" width="100" height="1082" viewBox="0 0 100 1082"><path d="M46.5 675 V1082" stroke="#6a6a6a" stroke-width="1" stroke-dasharray="1 1"/><path d="M47 675.5 H66" stroke="#6a6a6a" stroke-width="1" stroke-dasharray="1 1"/><path d="M47 709.5 H66" stroke="#6a6a6a" stroke-width="1" stroke-dasharray="1 1"/><path d="M47 743.5 H66" stroke="#6a6a6a" stroke-width="1" stroke-dasharray="1 1"/><path d="M47 777.5 H66" stroke="#6a6a6a" stroke-width="1" stroke-dasharray="1 1"/><path d="M47 811.5 H66" stroke="#6a6a6a" stroke-width="1" stroke-dasharray="1 1"/><path d="M47 845.5 H66" stroke="#6a6a6a" stroke-width="1" stroke-dasharray="1 1"/><path d="M47 879.5 H66" stroke="#6a6a6a" stroke-width="1" stroke-dasharray="1 1"/><path d="M47 913.5 H66" stroke="#6a6a6a" stroke-width="1" stroke-dasharray="1 1"/><path d="M47 947.5 H66" stroke="#6a6a6a" stroke-width="1" stroke-dasharray="1 1"/><path d="M47 981.5 H66" stroke="#6a6a6a" stroke-width="1" stroke-dasharray="1 1"/><path d="M47 1015.5 H66" stroke="#6a6a6a" stroke-width="1" stroke-dasharray="1 1"/><path d="M47 1049.5 H66" stroke="#6a6a6a" stroke-width="1" stroke-dasharray="1 1"/><path d="M47 1083.5 H66" stroke="#6a6a6a" stroke-width="1" stroke-dasharray="1 1"/></svg>
<svg style="position:absolute;left:67px;top:658px;" width="28" height="32" viewBox="0 0 28 32">
<path d="M4 1 H24 L27 12 H1Z" fill="#fff" stroke="#72d276" stroke-width="1"/>
<g stroke="#c4c4c4" stroke-width="1"><path d="M5 3.5H23M4.5 6H23.5M4 8.5H24M3.5 11H24.5"/></g>
<path d="M0.5 12 H27.5 L26 31 A1.5 1.5 0 0 1 24.5 32 H3.5 A1.5 1.5 0 0 1 2 31Z" fill="#5ccd62"/>
<rect x="7" y="16.5" width="13.5" height="2" fill="#fff"/></svg>
<svg style="position:absolute;left:67px;top:692px;" width="28" height="32" viewBox="0 0 28 32">
<path d="M4 1 H24 L27 12 H1Z" fill="#fff" stroke="#72d276" stroke-width="1"/>
<g stroke="#c4c4c4" stroke-width="1"><path d="M5 3.5H23M4.5 6H23.5M4 8.5H24M3.5 11H24.5"/></g>
<path d="M0.5 12 H27.5 L26 31 A1.5 1.5 0 0 1 24.5 32 H3.5 A1.5 1.5 0 0 1 2 31Z" fill="#5ccd62"/>
<circle cx="13.8" cy="19.5" r="3.4" fill="#d40000"/><path d="M8.5 30 Q9 23.5 13.8 23.5 Q18.6 23.5 19.1 30Z" fill="#d40000"/></svg>
<svg style="position:absolute;left:67px;top:726px;" width="28" height="32" viewBox="0 0 28 32">
<path d="M4 1 H24 L27 12 H1Z" fill="#fff" stroke="#72d276" stroke-width="1"/>
<g stroke="#c4c4c4" stroke-width="1"><path d="M5 3.5H23M4.5 6H23.5M4 8.5H24M3.5 11H24.5"/></g>
<path d="M0.5 12 H27.5 L26 31 A1.5 1.5 0 0 1 24.5 32 H3.5 A1.5 1.5 0 0 1 2 31Z" fill="#5ccd62"/>
<rect x="7" y="16.5" width="13.5" height="2" fill="#fff"/></svg>
<svg style="position:absolute;left:67px;top:760px;" width="28" height="32" viewBox="0 0 28 32">
<path d="M4 1 H24 L27 12 H1Z" fill="#fff" stroke="#72d276" stroke-width="1"/>
<g stroke="#c4c4c4" stroke-width="1"><path d="M5 3.5H23M4.5 6H23.5M4 8.5H24M3.5 11H24.5"/></g>
<path d="M0.5 12 H27.5 L26 31 A1.5 1.5 0 0 1 24.5 32 H3.5 A1.5 1.5 0 0 1 2 31Z" fill="#5ccd62"/>
<rect x="7" y="16.5" width="13.5" height="2" fill="#fff"/></svg>
<svg style="position:absolute;left:37px;top:769px;" width="18" height="18" viewBox="0 0 18 18">
<defs><linearGradient id="pg" x1="0" y1="0" x2="0" y2="1"><stop offset="0" stop-color="#ffffff"/><stop offset="1" stop-color="#d9d9d9"/></linearGradient></defs>
<rect x="0.5" y="0.5" width="17" height="17" fill="url(#pg)" stroke="#a0a0a0" stroke-width="1"/>
<path d="M4 9 H14 M9 4 V14" stroke="#2c3e87" stroke-width="2"/>
</svg>
<svg style="position:absolute;left:67px;top:794px;" width="28" height="32" viewBox="0 0 28 32">
<path d="M4 1 H24 L27 12 H1Z" fill="#fff" stroke="#72d276" stroke-width="1"/>
<g stroke="#c4c4c4" stroke-width="1"><path d="M5 3.5H23M4.5 6H23.5M4 8.5H24M3.5 11H24.5"/></g>
<path d="M0.5 12 H27.5 L26 31 A1.5 1.5 0 0 1 24.5 32 H3.5 A1.5 1.5 0 0 1 2 31Z" fill="#5ccd62"/>
<rect x="7" y="16.5" width="13.5" height="2" fill="#fff"/></svg>
<svg style="position:absolute;left:67px;top:828px;" width="28" height="32" viewBox="0 0 28 32">
<path d="M4 1 H24 L27 12 H1Z" fill="#fff" stroke="#72d276" stroke-width="1"/>
<g stroke="#c4c4c4" stroke-width="1"><path d="M5 3.5H23M4.5 6H23.5M4 8.5H24M3.5 11H24.5"/></g>
<path d="M0.5 12 H27.5 L26 31 A1.5 1.5 0 0 1 24.5 32 H3.5 A1.5 1.5 0 0 1 2 31Z" fill="#5ccd62"/>
<rect x="7" y="16.5" width="13.5" height="2" fill="#fff"/></svg>
<svg style="position:absolute;left:37px;top:837px;" width="18" height="18" viewBox="0 0 18 18">
<defs><linearGradient id="pg" x1="0" y1="0" x2="0" y2="1"><stop offset="0" stop-color="#ffffff"/><stop offset="1" stop-color="#d9d9d9"/></linearGradient></defs>
<rect x="0.5" y="0.5" width="17" height="17" fill="url(#pg)" stroke="#a0a0a0" stroke-width="1"/>
<path d="M4 9 H14 M9 4 V14" stroke="#2c3e87" stroke-width="2"/>
</svg>
<svg style="position:absolute;left:67px;top:862px;" width="28" height="32" viewBox="0 0 28 32">
<path d="M4 1 H24 L27 12 H1Z" fill="#fff" stroke="#72d276" stroke-width="1"/>
<g stroke="#c4c4c4" stroke-width="1"><path d="M5 3.5H23M4.5 6H23.5M4 8.5H24M3.5 11H24.5"/></g>
<path d="M0.5 12 H27.5 L26 31 A1.5 1.5 0 0 1 24.5 32 H3.5 A1.5 1.5 0 0 1 2 31Z" fill="#5ccd62"/>
<rect x="7" y="16.5" width="13.5" height="2" fill="#fff"/></svg>
<svg style="position:absolute;left:37px;top:871px;" width="18" height="18" viewBox="0 0 18 18">
<defs><linearGradient id="pg" x1="0" y1="0" x2="0" y2="1"><stop offset="0" stop-color="#ffffff"/><stop offset="1" stop-color="#d9d9d9"/></linearGradient></defs>
<rect x="0.5" y="0.5" width="17" height="17" fill="url(#pg)" stroke="#a0a0a0" stroke-width="1"/>
<path d="M4 9 H14 M9 4 V14" stroke="#2c3e87" stroke-width="2"/>
</svg>
<svg style="position:absolute;left:67px;top:896px;" width="28" height="32" viewBox="0 0 28 32">
<path d="M4 1 H24 L27 12 H1Z" fill="#fff" stroke="#72d276" stroke-width="1"/>
<g stroke="#c4c4c4" stroke-width="1"><path d="M5 3.5H23M4.5 6H23.5M4 8.5H24M3.5 11H24.5"/></g>
<path d="M0.5 12 H27.5 L26 31 A1.5 1.5 0 0 1 24.5 32 H3.5 A1.5 1.5 0 0 1 2 31Z" fill="#5ccd62"/>
<circle cx="13.8" cy="19.5" r="3.4" fill="#d40000"/><path d="M8.5 30 Q9 23.5 13.8 23.5 Q18.6 23.5 19.1 30Z" fill="#d40000"/></svg>
<svg style="position:absolute;left:67px;top:930px;" width="28" height="32" viewBox="0 0 28 32">
<path d="M4 1 H24 L27 12 H1Z" fill="#fff" stroke="#72d276" stroke-width="1"/>
<g stroke="#c4c4c4" stroke-width="1"><path d="M5 3.5H23M4.5 6H23.5M4 8.5H24M3.5 11H24.5"/></g>
<path d="M0.5 12 H27.5 L26 31 A1.5 1.5 0 0 1 24.5 32 H3.5 A1.5 1.5 0 0 1 2 31Z" fill="#5ccd62"/>
<rect x="7" y="16.5" width="13.5" height="2" fill="#fff"/></svg>
<svg style="position:absolute;left:67px;top:964px;" width="28" height="32" viewBox="0 0 28 32">
<path d="M4 1 H24 L27 12 H1Z" fill="#fff" stroke="#72d276" stroke-width="1"/>
<g stroke="#c4c4c4" stroke-width="1"><path d="M5 3.5H23M4.5 6H23.5M4 8.5H24M3.5 11H24.5"/></g>
<path d="M0.5 12 H27.5 L26 31 A1.5 1.5 0 0 1 24.5 32 H3.5 A1.5 1.5 0 0 1 2 31Z" fill="#5ccd62"/>
<rect x="7" y="16.5" width="13.5" height="2" fill="#fff"/></svg>
<svg style="position:absolute;left:37px;top:973px;" width="18" height="18" viewBox="0 0 18 18">
<defs><linearGradient id="pg" x1="0" y1="0" x2="0" y2="1"><stop offset="0" stop-color="#ffffff"/><stop offset="1" stop-color="#d9d9d9"/></linearGradient></defs>
<rect x="0.5" y="0.5" width="17" height="17" fill="url(#pg)" stroke="#a0a0a0" stroke-width="1"/>
<path d="M4 9 H14 M9 4 V14" stroke="#2c3e87" stroke-width="2"/>
</svg>
<svg style="position:absolute;left:67px;top:998px;" width="28" height="32" viewBox="0 0 28 32">
<path d="M4 1 H24 L27 12 H1Z" fill="#fff" stroke="#72d276" stroke-width="1"/>
<g stroke="#c4c4c4" stroke-width="1"><path d="M5 3.5H23M4.5 6H23.5M4 8.5H24M3.5 11H24.5"/></g>
<path d="M0.5 12 H27.5 L26 31 A1.5 1.5 0 0 1 24.5 32 H3.5 A1.5 1.5 0 0 1 2 31Z" fill="#5ccd62"/>
<rect x="7" y="16.5" width="13.5" height="2" fill="#fff"/></svg>
<svg style="position:absolute;left:37px;top:1007px;" width="18" height="18" viewBox="0 0 18 18">
<defs><linearGradient id="pg" x1="0" y1="0" x2="0" y2="1"><stop offset="0" stop-color="#ffffff"/><stop offset="1" stop-color="#d9d9d9"/></linearGradient></defs>
<rect x="0.5" y="0.5" width="17" height="17" fill="url(#pg)" stroke="#a0a0a0" stroke-width="1"/>
<path d="M4 9 H14 M9 4 V14" stroke="#2c3e87" stroke-width="2"/>
</svg>
<svg style="position:absolute;left:67px;top:1032px;" width="28" height="32" viewBox="0 0 28 32">
<path d="M4 1 H24 L27 12 H1Z" fill="#fff" stroke="#72d276" stroke-width="1"/>
<g stroke="#c4c4c4" stroke-width="1"><path d="M5 3.5H23M4.5 6H23.5M4 8.5H24M3.5 11H24.5"/></g>
<path d="M0.5 12 H27.5 L26 31 A1.5 1.5 0 0 1 24.5 32 H3.5 A1.5 1.5 0 0 1 2 31Z" fill="#5ccd62"/>
<rect x="7" y="16.5" width="13.5" height="2" fill="#fff"/></svg>
<svg style="position:absolute;left:37px;top:1041px;" width="18" height="18" viewBox="0 0 18 18">
<defs><linearGradient id="pg" x1="0" y1="0" x2="0" y2="1"><stop offset="0" stop-color="#ffffff"/><stop offset="1" stop-color="#d9d9d9"/></linearGradient></defs>
<rect x="0.5" y="0.5" width="17" height="17" fill="url(#pg)" stroke="#a0a0a0" stroke-width="1"/>
<path d="M4 9 H14 M9 4 V14" stroke="#2c3e87" stroke-width="2"/>
</svg>
<svg style="position:absolute;left:67px;top:1066px;" width="28" height="32" viewBox="0 0 28 32">
<path d="M4 1 H24 L27 12 H1Z" fill="#fff" stroke="#72d276" stroke-width="1"/>
<g stroke="#c4c4c4" stroke-width="1"><path d="M5 3.5H23M4.5 6H23.5M4 8.5H24M3.5 11H24.5"/></g>
<path d="M0.5 12 H27.5 L26 31 A1.5 1.5 0 0 1 24.5 32 H3.5 A1.5 1.5 0 0 1 2 31Z" fill="#5ccd62"/>
<rect x="7" y="16.5" width="13.5" height="2" fill="#fff"/></svg>
<svg style="position:absolute;left:37px;top:1075px;" width="18" height="18" viewBox="0 0 18 18">
<defs><linearGradient id="pg" x1="0" y1="0" x2="0" y2="1"><stop offset="0" stop-color="#ffffff"/><stop offset="1" stop-color="#d9d9d9"/></linearGradient></defs>
<rect x="0.5" y="0.5" width="17" height="17" fill="url(#pg)" stroke="#a0a0a0" stroke-width="1"/>
<path d="M4 9 H14 M9 4 V14" stroke="#2c3e87" stroke-width="2"/>
</svg>
<svg style="position:absolute;left:595px;top:670px;" width="13" height="10" viewBox="0 0 13 10"><path d="M1.5 8.5 L6.5 3 L11.5 8.5" fill="none" stroke="#5a5a5a" stroke-width="2.8"/></svg>
<div style="position:absolute;left:100px;top:1065px;width:472px;height:1px;background:repeating-linear-gradient(90deg,#333 0 1px,transparent 1px 2px);"></div>
<svg style="position:absolute;left:648px;top:575px;" width="200" height="200" viewBox="0 0 200 200"><g fill="none" stroke="#fff" stroke-width="1" shape-rendering="crispEdges"><rect x="49.5" y="31.5" width="104" height="159"/><path d="M72.5 31.5 V186.5"/><path d="M129.5 31.5 V186.5"/><rect x="68.5" y="7.5" width="65" height="24"/><circle cx="80.5" cy="19.5" r="7"/><path d="M79.0 15.5 L82.0 15.5 L82.0 18.0 L84.5 18.0 L84.5 21.0 L82.0 21.0 L82.0 23.5 L79.0 23.5 L79.0 21.0 L76.5 21.0 L76.5 18.0 L79.0 18.0Z"/><circle cx="120.5" cy="19.5" r="7"/><path d="M119.0 15.5 L122.0 15.5 L122.0 18.0 L124.5 18.0 L124.5 21.0 L122.0 21.0 L122.0 23.5 L119.0 23.5 L119.0 21.0 L116.5 21.0 L116.5 18.0 L119.0 18.0Z"/><rect x="49.5" y="21.5" width="51" height="10"/><rect x="53.5" y="26.5" width="12" height="5"/><rect x="92.5" y="19.5" width="17" height="12"/><rect x="130.5" y="28.5" width="20" height="12"/><circle cx="140.5" cy="37.9" r="5"/><path d="M49.5 40.5 H153.5"/><path d="M49.5 48.5 H153.5"/><path d="M49.5 62.5 H153.5"/><circle cx="62.5" cy="54.5" r="8"/><path d="M61.0 49.5 L64.0 49.5 L64.0 53.0 L67.5 53.0 L67.5 56.0 L64.0 56.0 L64.0 59.5 L61.0 59.5 L61.0 56.0 L57.5 56.0 L57.5 53.0 L61.0 53.0Z"/><circle cx="87.5" cy="54.5" r="8"/><path d="M86.0 49.5 L89.0 49.5 L89.0 53.0 L92.5 53.0 L92.5 56.0 L89.0 56.0 L89.0 59.5 L86.0 59.5 L86.0 56.0 L82.5 56.0 L82.5 53.0 L86.0 53.0Z"/><circle cx="113.5" cy="54.5" r="8"/><path d="M112.0 49.5 L115.0 49.5 L115.0 53.0 L118.5 53.0 L118.5 56.0 L115.0 56.0 L115.0 59.5 L112.0 59.5 L112.0 56.0 L108.5 56.0 L108.5 53.0 L112.0 53.0Z"/><circle cx="138.5" cy="54.5" r="8"/><path d="M137.0 49.5 L140.0 49.5 L140.0 53.0 L143.5 53.0 L143.5 56.0 L140.0 56.0 L140.0 59.5 L137.0 59.5 L137.0 56.0 L133.5 56.0 L133.5 53.0 L137.0 53.0Z"/><rect x="79.5" y="68.5" width="43" height="21"/><path d="M89.5 68.5 V89.5"/><path d="M112.5 68.5 V89.5"/><rect x="86.5" y="95.5" width="28" height="20"/><path d="M94.5 95.5 V115.5"/><path d="M106.5 95.5 V115.5"/><rect x="78.5" y="127.5" width="45" height="17"/><path d="M49.5 150.5 H153.5"/><path d="M49.5 164.5 H153.5"/><path d="M49.5 171.5 H153.5"/><path d="M49.5 179.5 H153.5"/><circle cx="62.5" cy="156.5" r="8"/><path d="M61.0 151.5 L64.0 151.5 L64.0 155.0 L67.5 155.0 L67.5 158.0 L64.0 158.0 L64.0 161.5 L61.0 161.5 L61.0 158.0 L57.5 158.0 L57.5 155.0 L61.0 155.0Z"/><circle cx="87.5" cy="156.5" r="8"/><path d="M86.0 151.5 L89.0 151.5 L89.0 155.0 L92.5 155.0 L92.5 158.0 L89.0 158.0 L89.0 161.5 L86.0 161.5 L86.0 158.0 L82.5 158.0 L82.5 155.0 L86.0 155.0Z"/><circle cx="113.5" cy="156.5" r="8"/><path d="M112.0 151.5 L115.0 151.5 L115.0 155.0 L118.5 155.0 L118.5 158.0 L115.0 158.0 L115.0 161.5 L112.0 161.5 L112.0 158.0 L108.5 158.0 L108.5 155.0 L112.0 155.0Z"/><circle cx="138.5" cy="156.5" r="8"/><path d="M137.0 151.5 L140.0 151.5 L140.0 155.0 L143.5 155.0 L143.5 158.0 L140.0 158.0 L140.0 161.5 L137.0 161.5 L137.0 158.0 L133.5 158.0 L133.5 155.0 L137.0 155.0Z"/><circle cx="60" cy="176.5" r="5"/><rect x="63.5" y="184.5" width="90" height="6"/><rect x="89.5" y="180.5" width="22" height="13"/><rect x="80.5" y="177.5" width="20" height="11"/></g></svg>
<svg style="position:absolute;left:888px;top:575px;" width="200" height="200" viewBox="0 0 200 200"><g fill="none" stroke="#fff" stroke-width="1" shape-rendering="crispEdges"><rect x="95.5" y="7.5" width="20" height="187"/><path d="M95.5 22.5 H115.5"/><path d="M95.5 24.5 H115.5"/><path d="M95.5 49.5 H115.5"/><path d="M95.5 53.5 H115.5"/><path d="M95.5 147.5 H115.5"/><path d="M95.5 151.5 H115.5"/><path d="M95.5 176.5 H115.5"/><path d="M95.5 178.5 H115.5"/><circle cx="105.5" cy="15.5" r="5"/><path d="M104.5 12.5 L106.5 12.5 L106.5 14.5 L108.5 14.5 L108.5 16.5 L106.5 16.5 L106.5 18.5 L104.5 18.5 L104.5 16.5 L102.5 16.5 L102.5 14.5 L104.5 14.5Z"/><circle cx="105.5" cy="184.5" r="5"/><path d="M104.5 181.5 L106.5 181.5 L106.5 183.5 L108.5 183.5 L108.5 185.5 L106.5 185.5 L106.5 187.5 L104.5 187.5 L104.5 185.5 L102.5 185.5 L102.5 183.5 L104.5 183.5Z"/><circle cx="105.4" cy="38.8" r="7" stroke-dasharray="2 1"/><circle cx="105.4" cy="38.8" r="3.5"/><circle cx="105.5" cy="160.5" r="7"/><path d="M104.0 156.5 L107.0 156.5 L107.0 159.0 L109.5 159.0 L109.5 162.0 L107.0 162.0 L107.0 164.5 L104.0 164.5 L104.0 162.0 L101.5 162.0 L101.5 159.0 L104.0 159.0Z"/><rect x="89.5" y="31.5" width="6" height="4"/><rect x="85.5" y="37.5" width="10" height="11"/><rect x="90.5" y="62.5" width="5" height="5"/><rect x="88.5" y="98.5" width="7" height="4"/><rect x="90.5" y="132.5" width="5" height="7"/><rect x="85.5" y="152.5" width="10" height="11"/><rect x="89.5" y="182.5" width="6" height="4"/></g></svg>
<svg style="position:absolute;left:1128px;top:575px;" width="200" height="200" viewBox="0 0 200 200"><g fill="none" stroke="#fff" stroke-width="1" shape-rendering="crispEdges"><rect x="82.5" y="7.5" width="36" height="186"/><path d="M82.5 15.5 H118.5"/><path d="M82.5 185.5 H118.5"/></g></svg>
<svg style="position:absolute;left:648px;top:855px;" width="200" height="200" viewBox="0 0 200 200"><g fill="none" stroke="#fff" stroke-width="1" shape-rendering="crispEdges"><rect x="61.5" y="7.5" width="78" height="177"/><path d="M79.5 9.5 H139.5"/><path d="M79.5 183.5 H139.5"/><rect x="61.5" y="7.5" width="18" height="16"/><path d="M61.5 20.5 H79.5"/><rect x="61.5" y="170.5" width="18" height="14"/><path d="M61.5 172.5 H79.5"/><circle cx="91.5" cy="26.5" r="8"/><path d="M90.0 21.5 L93.0 21.5 L93.0 25.0 L96.5 25.0 L96.5 28.0 L93.0 28.0 L93.0 31.5 L90.0 31.5 L90.0 28.0 L86.5 28.0 L86.5 25.0 L90.0 25.0Z"/><circle cx="91.5" cy="164.5" r="8"/><path d="M90.0 159.5 L93.0 159.5 L93.0 163.0 L96.5 163.0 L96.5 166.0 L93.0 166.0 L93.0 169.5 L90.0 169.5 L90.0 166.0 L86.5 166.0 L86.5 163.0 L90.0 163.0Z"/><circle cx="116.5" cy="26.5" r="8"/><path d="M115.0 21.5 L118.0 21.5 L118.0 25.0 L121.5 25.0 L121.5 28.0 L118.0 28.0 L118.0 31.5 L115.0 31.5 L115.0 28.0 L111.5 28.0 L111.5 25.0 L115.0 25.0Z"/><circle cx="116.5" cy="164.5" r="8"/><path d="M115.0 159.5 L118.0 159.5 L118.0 163.0 L121.5 163.0 L121.5 166.0 L118.0 166.0 L118.0 169.5 L115.0 169.5 L115.0 166.0 L111.5 166.0 L111.5 163.0 L115.0 163.0Z"/><circle cx="70.5" cy="37.5" r="6.5"/><path d="M69.0 33.5 L72.0 33.5 L72.0 36.0 L74.5 36.0 L74.5 39.0 L72.0 39.0 L72.0 41.5 L69.0 41.5 L69.0 39.0 L66.5 39.0 L66.5 36.0 L69.0 36.0Z"/><circle cx="70.5" cy="154.5" r="6.5"/><path d="M69.0 150.5 L72.0 150.5 L72.0 153.0 L74.5 153.0 L74.5 156.0 L72.0 156.0 L72.0 158.5 L69.0 158.5 L69.0 156.0 L66.5 156.0 L66.5 153.0 L69.0 153.0Z"/><rect x="81.5" y="36.5" width="44" height="9"/><rect x="101.5" y="36.5" width="6" height="8"/><rect x="128.5" y="35.5" width="7" height="10"/><rect x="81.5" y="146.5" width="44" height="9"/><rect x="101.5" y="147.5" width="6" height="8"/><rect x="128.5" y="146.5" width="7" height="10"/><path d="M61.5 47.5 H139.5"/><path d="M61.5 51.5 H139.5"/><path d="M61.5 141.5 H101.5"/><path d="M61.5 145.5 H139.5"/><rect x="125.5" y="74.5" width="11" height="7"/><rect x="101.5" y="127.5" width="37" height="17"/><rect x="86.5" y="184.5" width="27" height="9"/><path d="M93 187 L100 190.5 L107 187"/></g></svg>
<svg style="position:absolute;left:888px;top:855px;" width="200" height="200" viewBox="0 0 200 200"><g fill="none" stroke="#fff" stroke-width="1" shape-rendering="crispEdges"><rect x="41.5" y="7.5" width="118" height="177"/><path d="M57.5 9.5 H159.5"/><path d="M57.5 183.5 H159.5"/><rect x="41.5" y="7.5" width="16" height="16"/><path d="M41.5 20.5 H57.5"/><rect x="41.5" y="170.5" width="16" height="14"/><path d="M41.5 172.5 H57.5"/><circle cx="70.5" cy="26.5" r="8"/><path d="M69.0 21.5 L72.0 21.5 L72.0 25.0 L75.5 25.0 L75.5 28.0 L72.0 28.0 L72.0 31.5 L69.0 31.5 L69.0 28.0 L65.5 28.0 L65.5 25.0 L69.0 25.0Z"/><circle cx="70.5" cy="164.5" r="8"/><path d="M69.0 159.5 L72.0 159.5 L72.0 163.0 L75.5 163.0 L75.5 166.0 L72.0 166.0 L72.0 169.5 L69.0 169.5 L69.0 166.0 L65.5 166.0 L65.5 163.0 L69.0 163.0Z"/><circle cx="95.5" cy="26.5" r="8"/><path d="M94.0 21.5 L97.0 21.5 L97.0 25.0 L100.5 25.0 L100.5 28.0 L97.0 28.0 L97.0 31.5 L94.0 31.5 L94.0 28.0 L90.5 28.0 L90.5 25.0 L94.0 25.0Z"/><circle cx="95.5" cy="164.5" r="8"/><path d="M94.0 159.5 L97.0 159.5 L97.0 163.0 L100.5 163.0 L100.5 166.0 L97.0 166.0 L97.0 169.5 L94.0 169.5 L94.0 166.0 L90.5 166.0 L90.5 163.0 L94.0 163.0Z"/><circle cx="120.5" cy="26.5" r="8"/><path d="M119.0 21.5 L122.0 21.5 L122.0 25.0 L125.5 25.0 L125.5 28.0 L122.0 28.0 L122.0 31.5 L119.0 31.5 L119.0 28.0 L115.5 28.0 L115.5 25.0 L119.0 25.0Z"/><circle cx="120.5" cy="164.5" r="8"/><path d="M119.0 159.5 L122.0 159.5 L122.0 163.0 L125.5 163.0 L125.5 166.0 L122.0 166.0 L122.0 169.5 L119.0 169.5 L119.0 166.0 L115.5 166.0 L115.5 163.0 L119.0 163.0Z"/><circle cx="146.5" cy="26.5" r="8"/><path d="M145.0 21.5 L148.0 21.5 L148.0 25.0 L151.5 25.0 L151.5 28.0 L148.0 28.0 L148.0 31.5 L145.0 31.5 L145.0 28.0 L141.5 28.0 L141.5 25.0 L145.0 25.0Z"/><circle cx="146.5" cy="164.5" r="8"/><path d="M145.0 159.5 L148.0 159.5 L148.0 163.0 L151.5 163.0 L151.5 166.0 L148.0 166.0 L148.0 169.5 L145.0 169.5 L145.0 166.0 L141.5 166.0 L141.5 163.0 L145.0 163.0Z"/><circle cx="49.5" cy="37.5" r="6.5"/><path d="M48.0 33.5 L51.0 33.5 L51.0 36.0 L53.5 36.0 L53.5 39.0 L51.0 39.0 L51.0 41.5 L48.0 41.5 L48.0 39.0 L45.5 39.0 L45.5 36.0 L48.0 36.0Z"/><circle cx="49.5" cy="154.5" r="6.5"/><path d="M48.0 150.5 L51.0 150.5 L51.0 153.0 L53.5 153.0 L53.5 156.0 L51.0 156.0 L51.0 158.5 L48.0 158.5 L48.0 156.0 L45.5 156.0 L45.5 153.0 L48.0 153.0Z"/><rect x="71.5" y="36.5" width="75" height="9"/><rect x="105.5" y="36.5" width="5" height="8"/><rect x="147.5" y="35.5" width="8" height="10"/><rect x="71.5" y="146.5" width="75" height="9"/><rect x="105.5" y="147.5" width="5" height="8"/><rect x="147.5" y="146.5" width="8" height="10"/><path d="M41.5 47.5 H159.5"/><path d="M41.5 51.5 H159.5"/><path d="M41.5 141.5 H120.5"/><path d="M41.5 145.5 H159.5"/><rect x="145.5" y="74.5" width="11" height="7"/><rect x="120.5" y="127.5" width="37" height="17"/><rect x="86.5" y="184.5" width="27" height="9"/><path d="M93 187 L100 190.5 L107 187"/></g></svg>
<svg style="position:absolute;left:1128px;top:855px;" width="200" height="200" viewBox="0 0 200 200"><g fill="none" stroke="#fff" stroke-width="1" shape-rendering="crispEdges"><rect x="41.5" y="7.5" width="118" height="177"/><path d="M57.5 9.5 H159.5"/><path d="M57.5 183.5 H159.5"/><rect x="41.5" y="7.5" width="16" height="16"/><path d="M41.5 20.5 H57.5"/><rect x="41.5" y="170.5" width="16" height="14"/><path d="M41.5 172.5 H57.5"/><circle cx="70.5" cy="26.5" r="8"/><path d="M69.0 21.5 L72.0 21.5 L72.0 25.0 L75.5 25.0 L75.5 28.0 L72.0 28.0 L72.0 31.5 L69.0 31.5 L69.0 28.0 L65.5 28.0 L65.5 25.0 L69.0 25.0Z"/><circle cx="70.5" cy="164.5" r="8"/><path d="M69.0 159.5 L72.0 159.5 L72.0 163.0 L75.5 163.0 L75.5 166.0 L72.0 166.0 L72.0 169.5 L69.0 169.5 L69.0 166.0 L65.5 166.0 L65.5 163.0 L69.0 163.0Z"/><circle cx="95.5" cy="26.5" r="8"/><path d="M94.0 21.5 L97.0 21.5 L97.0 25.0 L100.5 25.0 L100.5 28.0 L97.0 28.0 L97.0 31.5 L94.0 31.5 L94.0 28.0 L90.5 28.0 L90.5 25.0 L94.0 25.0Z"/><circle cx="95.5" cy="164.5" r="8"/><path d="M94.0 159.5 L97.0 159.5 L97.0 163.0 L100.5 163.0 L100.5 166.0 L97.0 166.0 L97.0 169.5 L94.0 169.5 L94.0 166.0 L90.5 166.0 L90.5 163.0 L94.0 163.0Z"/><circle cx="120.5" cy="26.5" r="8"/><path d="M119.0 21.5 L122.0 21.5 L122.0 25.0 L125.5 25.0 L125.5 28.0 L122.0 28.0 L122.0 31.5 L119.0 31.5 L119.0 28.0 L115.5 28.0 L115.5 25.0 L119.0 25.0Z"/><circle cx="120.5" cy="164.5" r="8"/><path d="M119.0 159.5 L122.0 159.5 L122.0 163.0 L125.5 163.0 L125.5 166.0 L122.0 166.0 L122.0 169.5 L119.0 169.5 L119.0 166.0 L115.5 166.0 L115.5 163.0 L119.0 163.0Z"/><circle cx="146.5" cy="26.5" r="8"/><path d="M145.0 21.5 L148.0 21.5 L148.0 25.0 L151.5 25.0 L151.5 28.0 L148.0 28.0 L148.0 31.5 L145.0 31.5 L145.0 28.0 L141.5 28.0 L141.5 25.0 L145.0 25.0Z"/><circle cx="146.5" cy="164.5" r="8"/><path d="M145.0 159.5 L148.0 159.5 L148.0 163.0 L151.5 163.0 L151.5 166.0 L148.0 166.0 L148.0 169.5 L145.0 169.5 L145.0 166.0 L141.5 166.0 L141.5 163.0 L145.0 163.0Z"/><circle cx="49.5" cy="37.5" r="6.5"/><path d="M48.0 33.5 L51.0 33.5 L51.0 36.0 L53.5 36.0 L53.5 39.0 L51.0 39.0 L51.0 41.5 L48.0 41.5 L48.0 39.0 L45.5 39.0 L45.5 36.0 L48.0 36.0Z"/><circle cx="49.5" cy="154.5" r="6.5"/><path d="M48.0 150.5 L51.0 150.5 L51.0 153.0 L53.5 153.0 L53.5 156.0 L51.0 156.0 L51.0 158.5 L48.0 158.5 L48.0 156.0 L45.5 156.0 L45.5 153.0 L48.0 153.0Z"/><rect x="71.5" y="36.5" width="75" height="9"/><rect x="105.5" y="36.5" width="5" height="8"/><rect x="147.5" y="35.5" width="8" height="10"/><rect x="71.5" y="146.5" width="75" height="9"/><rect x="105.5" y="147.5" width="5" height="8"/><rect x="147.5" y="146.5" width="8" height="10"/><path d="M41.5 47.5 H159.5"/><path d="M41.5 51.5 H159.5"/><path d="M41.5 141.5 H120.5"/><path d="M41.5 145.5 H159.5"/><rect x="145.5" y="74.5" width="11" height="7"/><rect x="120.5" y="127.5" width="37" height="17"/><rect x="86.5" y="184.5" width="27" height="9"/><path d="M93 187 L100 190.5 L107 187"/></g></svg>
<div style="position:absolute;left:209px;top:566px;width:361px;height:250px;background:rgba(0,0,0,0.30);filter:blur(1px)"></div>
<div style="position:absolute;left:207px;top:561px;width:361px;height:252px;background:#efefef;border:1px solid #a8a8a8;box-sizing:border-box"></div>
<div style="position:absolute;left:221.7px;top:581.1px;font-size:24px;line-height:24px;color:#404346;font-weight:700;letter-spacing:0.27px;white-space:pre;">Import DWG files</div>
<div style="position:absolute;left:375.8px;top:632.6px;font-size:24px;line-height:24px;color:#4a4f55;font-weight:400;letter-spacing:-0.31px;white-space:pre;">Import DWG</div>
<div style="position:absolute;left:375.8px;top:664.6px;font-size:24px;line-height:24px;color:#4a4f55;font-weight:400;letter-spacing:-0.56px;white-space:pre;">(or DXF) files</div>
<div style="position:absolute;left:375.8px;top:696.6px;font-size:24px;line-height:24px;color:#4a4f55;font-weight:400;letter-spacing:0.13px;white-space:pre;">and add to</div>
<div style="position:absolute;left:375.8px;top:728.6px;font-size:24px;line-height:24px;color:#4a4f55;font-weight:400;letter-spacing:-0.23px;white-space:pre;">library as new</div>
<div style="position:absolute;left:375.8px;top:760.6px;font-size:24px;line-height:24px;color:#4a4f55;font-weight:400;letter-spacing:-0.33px;white-space:pre;">symbols</div>
<svg style="position:absolute;left:237px;top:638px;" width="130" height="106" viewBox="0 0 130 106">
<path d="M7 3 H78.5 L111 34 V97 A6 6 0 0 1 105 103 H7 A6 6 0 0 1 1 97 V9 A6 6 0 0 1 7 3Z" fill="#fff" stroke="#999" stroke-width="3.6"/>
<path d="M78.5 3 V20" stroke="#999" stroke-width="3.6"/>
<text x="13.5" y="92.3" font-family="Liberation Sans" font-weight="700" font-size="34" fill="#1a1a1a" textLength="84" lengthAdjust="spacingAndGlyphs">.DWG</text>
<rect x="62" y="26.5" width="50" height="10.5" fill="#179ad6"/>
<path d="M102.3 7.5 L127.8 31.4 L102.3 56.3 L95 49 L113 31.4 L95 14.5Z" fill="#179ad6"/>
</svg>
<svg style="position:absolute;left:0px;top:0px;pointer-events:none" width="1312" height="1082" viewBox="0 0 1312 1082">
<defs><filter id="ash" x="-20%" y="-20%" width="140%" height="140%"><feGaussianBlur in="SourceAlpha" stdDeviation="2"/><feOffset dx="2" dy="2"/><feComponentTransfer><feFuncA type="linear" slope="0.45"/></feComponentTransfer><feMerge><feMergeNode/><feMergeNode in="SourceGraphic"/></feMerge></filter></defs>
<g filter="url(#ash)">
<path d="M457.3 234 L330 377" stroke="#e8453c" stroke-width="9" stroke-linecap="round"/>
<path d="M311.3 399.5 L318 369 L343 387.5Z" fill="#e8453c" stroke="#e8453c" stroke-width="2" stroke-linejoin="round"/>
</g></svg>
</body></html>
